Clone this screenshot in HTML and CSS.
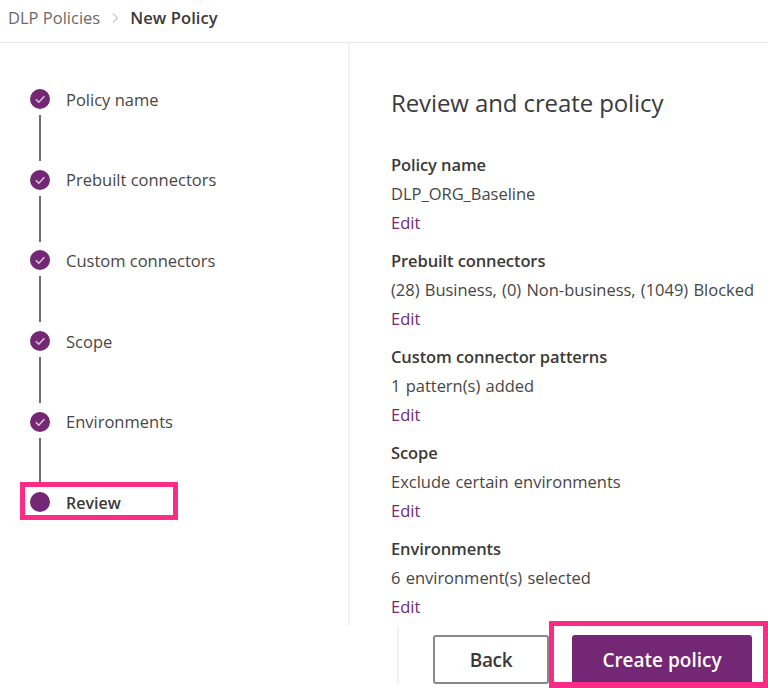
FILE: index.html
```html
<!DOCTYPE html>
<html lang="en">
<head>
<meta charset="utf-8">
<title>New Policy</title>
<link rel="stylesheet" href="styles.css">
</head>
<body>
<div class="page">
  <header class="crumbs">
    <span class="crumb">DLP Policies</span>
    <svg class="chev" viewBox="0 0 10 12" aria-hidden="true"><path d="M3 1.5 L7.5 6 L3 10.5" /></svg>
    <strong class="crumb-current">New Policy</strong>
  </header>
  <main class="main">
    <nav class="steps">
      <div class="step"><span class="dot"><svg viewBox="0 0 20 20"><path d="M5.8 10.3 L8.8 13.2 L14.4 7.3"/></svg></span><span class="step-label">Policy name</span></div>
      <div class="step"><span class="dot"><svg viewBox="0 0 20 20"><path d="M5.8 10.3 L8.8 13.2 L14.4 7.3"/></svg></span><span class="step-label">Prebuilt connectors</span></div>
      <div class="step"><span class="dot"><svg viewBox="0 0 20 20"><path d="M5.8 10.3 L8.8 13.2 L14.4 7.3"/></svg></span><span class="step-label">Custom connectors</span></div>
      <div class="step"><span class="dot"><svg viewBox="0 0 20 20"><path d="M5.8 10.3 L8.8 13.2 L14.4 7.3"/></svg></span><span class="step-label">Scope</span></div>
      <div class="step"><span class="dot"><svg viewBox="0 0 20 20"><path d="M5.8 10.3 L8.8 13.2 L14.4 7.3"/></svg></span><span class="step-label">Environments</span></div>
      <div class="step step-current"><span class="dot"></span><span class="step-label">Review</span><span class="mark mark-review"></span></div>
    </nav>
    <section class="review">
      <h1 class="title">Review and create policy</h1>
      <div class="group"><h2 class="group-name">Policy name</h2><p class="group-value">DLP_ORG_Baseline</p><a class="edit" href="#">Edit</a></div>
      <div class="group"><h2 class="group-name">Prebuilt connectors</h2><p class="group-value">(28) Business, (0) Non-business, (1049) Blocked</p><a class="edit" href="#">Edit</a></div>
      <div class="group"><h2 class="group-name">Custom connector patterns</h2><p class="group-value">1 pattern(s) added</p><a class="edit" href="#">Edit</a></div>
      <div class="group"><h2 class="group-name">Scope</h2><p class="group-value">Exclude certain environments</p><a class="edit" href="#">Edit</a></div>
      <div class="group"><h2 class="group-name">Environments</h2><p class="group-value">6 environment(s) selected</p><a class="edit" href="#">Edit</a></div>
    </section>
  </main>
  <footer class="actions">
    <button class="btn btn-back" type="button">Back</button>
    <button class="btn btn-create" type="button">Create policy</button>
    <span class="mark mark-create"></span>
  </footer>
</div>
</body>
</html>
```
FILE: styles.css
```css
* { box-sizing: border-box; }
html, body { margin: 0; padding: 0; background: #fff; }
body { font-family: "Open Sans", "Noto Sans", sans-serif; color: #3b3a39; overflow: hidden; }
.page { position: relative; width: 768px; height: 688px; overflow: hidden; display: flex; flex-direction: column; }

.crumbs { height: 43px; flex: none; border-bottom: 1px solid #e8e8e8; display: flex; align-items: center; padding: 0 0 7px 8px; font-size: 16.5px; }
.crumb { color: #6b6a69; }
.chev { width: 10px; height: 12px; margin: 0 10px 0 10px; }
.chev path { fill: none; stroke: #a5a4a3; stroke-width: 1; }
.crumb-current { font-weight: 600; color: #3b3a39; letter-spacing: 0.1px; }

.main { display: flex; height: 583px; flex: none; }
.steps { width: 350px; flex: none; border-right: 2px solid #f1f1f1; padding: 46px 0 0 30px; }
.step { position: relative; display: flex; align-items: center; height: 20px; margin-bottom: 60.7px; }
.step:not(:last-child)::after { content: ""; position: absolute; left: 9px; top: 26px; width: 2px; height: 46px; background: #6f6e6d; }
.dot { width: 20px; height: 20px; border-radius: 50%; background: #742774; flex: none; display: block; }
.dot svg { display: block; width: 20px; height: 20px; }
.dot path { fill: none; stroke: #dcc8dc; stroke-width: 1.5; }
.step-label { margin-left: 16px; font-size: 16.5px; color: #484644; position: relative; top: 0; }
.step-current .step-label { font-weight: 600; color: #3b3a39; font-size: 16px; top: 1px; }

.review { flex: 1; padding: 0 0 0 41px; min-width: 0; white-space: nowrap; }
.title { margin: 43px 0 30px; font-weight: 400; font-size: 24px; line-height: 34px; letter-spacing: -0.1px; color: #3b3a39; }
.group { margin-bottom: 9px; height: 87px; }
.group-name { margin: 0; font-size: 16.5px; line-height: 29px; font-weight: 600; letter-spacing: -0.1px; color: #3b3a39; }
.group-value { margin: 0; font-size: 16.5px; line-height: 29px; letter-spacing: -0.02px; word-spacing: 1px; color: #484644; }
.edit { display: block; font-size: 16.5px; line-height: 29px; color: #742774; text-decoration: none; }

.actions { flex: 1; margin-left: 397px; border-left: 2px solid #f1f1f1; margin-bottom: 4px; display: flex; align-items: flex-start; padding: 9px 0 0 34px; }
.btn { font-family: inherit; font-size: 19px; font-weight: 600; height: 49px; border-radius: 3px; padding: 0; }
.btn-back { width: 116px; background: #fff; border: 2px solid #8a8886; color: #3b3a39; letter-spacing: -0.4px; }
.btn-create { width: 180px; margin-left: 23px; background: #742774; border: 0; color: #fff; }

.mark { position: absolute; border: 5px solid #fb2c86; pointer-events: none; }
.mark-review { left: -10px; top: -10px; width: 158px; height: 38px; }
.mark-create { left: 549px; top: 621px; width: 219px; height: 67px; border-width: 5px 5px 6px 5px; }
```
